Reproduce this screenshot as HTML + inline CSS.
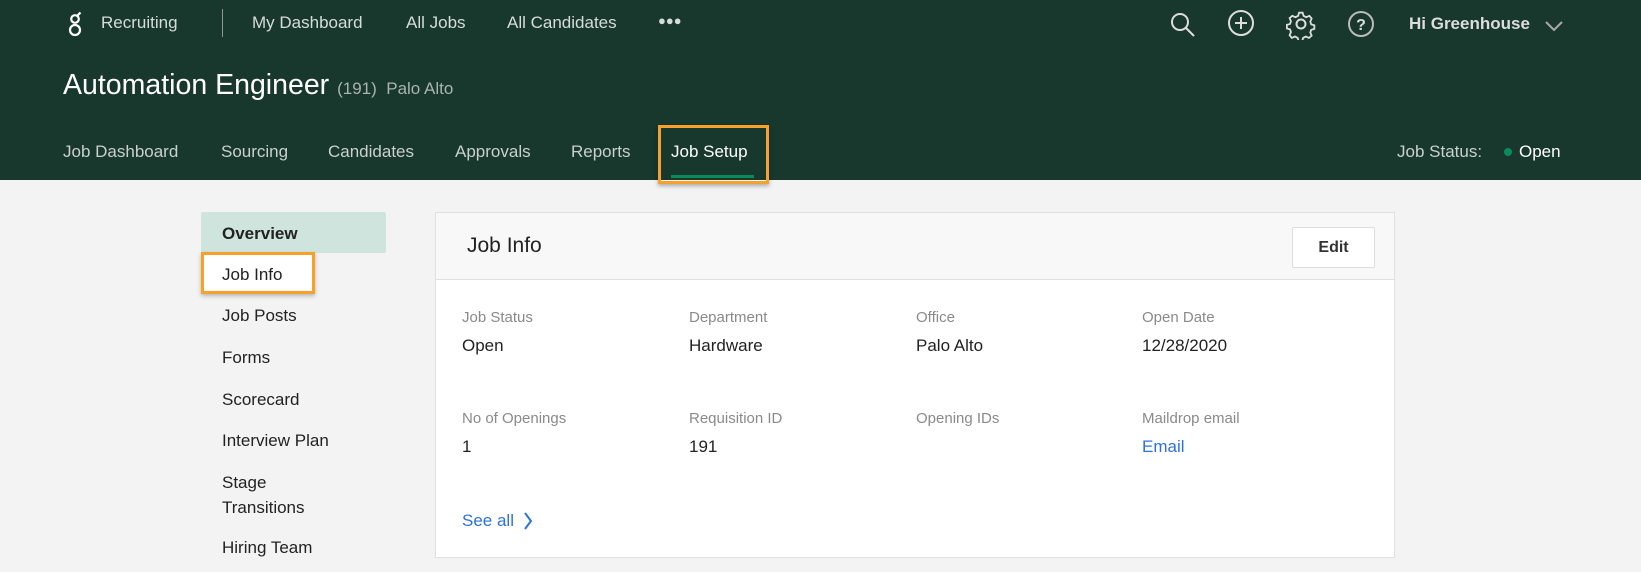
<!DOCTYPE html>
<html><head><meta charset="utf-8"><style>
*{margin:0;padding:0;box-sizing:border-box}
body{width:1641px;height:572px;overflow:hidden;background:#f3f3f3;font-family:"Liberation Sans",sans-serif;position:relative}
.hd{position:absolute;left:0;top:0;width:1641px;height:180px;background:#18372d}
.a{position:absolute;white-space:nowrap}
.nav{color:#d6dcd9;font-size:17px}
.tab{color:#c9d0cd;font-size:17px;top:142px}
.lbl{color:#8a8a8a;font-size:15px}
.val{color:#222;font-size:17px}
.side{color:#222;font-size:17px;left:222px}
</style></head><body>
<div class="hd"></div>
<svg class="a" style="left:66px;top:10px" width="18" height="28" viewBox="0 0 18 28" fill="none" stroke="#fff" stroke-width="2.2"><circle cx="9" cy="9" r="3.8"/><circle cx="9" cy="20" r="5"/><path d="M11.5 5.5 L14.5 2.5"/></svg>
<div class="a nav" style="left:101px;top:13px">Recruiting</div>
<div class="a" style="left:222px;top:9px;width:1px;height:28px;background:#8a9a94"></div>
<div class="a nav" style="left:252px;top:13px">My Dashboard</div>
<div class="a nav" style="left:406px;top:13px">All Jobs</div>
<div class="a nav" style="left:507px;top:13px">All Candidates</div>
<div class="a nav" style="left:658px;top:13px;font-size:13px;letter-spacing:0px">●●●</div>
<div class="a" style="left:63px;top:69px;color:#fff;font-size:28.5px">Automation Engineer <span style="font-size:17px;color:#a9b4b0">(191)&nbsp; Palo Alto</span></div>
<div class="a tab" style="left:63px">Job Dashboard</div>
<div class="a tab" style="left:221px">Sourcing</div>
<div class="a tab" style="left:328px">Candidates</div>
<div class="a tab" style="left:455px">Approvals</div>
<div class="a tab" style="left:571px">Reports</div>
<div class="a tab" style="left:671px;color:#fff">Job Setup</div>
<div class="a" style="left:671px;top:175px;width:83px;height:3px;background:#0b8a5c"></div>
<div class="a" style="left:658px;top:125px;width:111px;height:59px;border:3px solid #f7a12b;box-shadow:0 2px 4px rgba(0,0,0,.3)"></div>
<svg class="a" style="left:1168px;top:10px" width="30" height="30" viewBox="0 0 30 30" fill="none" stroke="#ddd" stroke-width="2"><circle cx="12" cy="12" r="8"/><path d="M18 18 L26 26"/></svg>
<svg class="a" style="left:1226px;top:10px" width="30" height="30" viewBox="0 0 30 30" fill="none" stroke="#ddd" stroke-width="2"><circle cx="15" cy="13" r="12"/><path d="M15 7V19M9 13H21"/></svg>
<svg class="a" style="left:1286px;top:10px" width="30" height="30" viewBox="0 0 30 30" fill="none" stroke="#ddd" stroke-width="2"><circle cx="15" cy="14" r="4.5"/><path d="M13 2h4l1 3.5 3 1.5 3.5-1.5 2.5 3-1.5 3.5 1 3 3.5 1v4l-3.5 1-1 3 1.5 3.5-3 2.5-3.5-1.5-3 1.5-1 3.5h-4l-1-3.5-3-1.5-3.5 1.5-2.5-3 1.5-3.5-1-3-3.5-1v-4l3.5-1 1-3-1.5-3.5 3-2.5 3.5 1.5 3-1.5z" transform="scale(.9) translate(1.5,1)"/></svg>
<svg class="a" style="left:1346px;top:10px" width="30" height="30" viewBox="0 0 30 30"><circle cx="15" cy="14" r="12" fill="none" stroke="#bbb" stroke-width="2"/><text x="15" y="20" text-anchor="middle" fill="#ddd" font-size="16" font-family="Liberation Sans" font-weight="bold">?</text></svg>
<div class="a" style="left:1409px;top:14px;color:#ddd;font-size:17px;font-weight:bold">Hi Greenhouse</div>
<svg class="a" style="left:1544px;top:19px" width="20" height="14" viewBox="0 0 20 14" fill="none" stroke="#aaa" stroke-width="2"><path d="M2 3 L10 11 L18 3"/></svg>
<div class="a" style="left:1397px;top:142px;color:#c9d0cd;font-size:17px">Job Status:</div>
<div class="a" style="left:1504px;top:148px;width:8px;height:8px;border-radius:50%;background:#0b8a5c"></div>
<div class="a" style="left:1519px;top:142px;color:#fff;font-size:17px">Open</div>

<div class="a" style="left:201px;top:212px;width:185px;height:41px;background:#d0e4de;border-radius:2px"></div>
<div class="a side" style="top:224px;font-weight:bold">Overview</div>
<div class="a" style="left:201px;top:252px;width:114px;height:42px;border:3px solid #f7a12b;background:#fff;box-shadow:0 2px 4px rgba(0,0,0,.25)"></div>
<div class="a side" style="top:265px">Job Info</div>
<div class="a side" style="top:306px">Job Posts</div>
<div class="a side" style="top:348px">Forms</div>
<div class="a side" style="top:390px">Scorecard</div>
<div class="a side" style="top:431px">Interview Plan</div>
<div class="a side" style="top:473px">Stage</div>
<div class="a side" style="top:498px">Transitions</div>
<div class="a side" style="top:538px">Hiring Team</div>

<div class="a" style="left:435px;top:212px;width:960px;height:346px;background:#fff;border:1px solid #e0e0e0"></div>
<div class="a" style="left:436px;top:213px;width:958px;height:67px;background:#f8f8f8;border-bottom:1px solid #e0e0e0"></div>
<div class="a" style="left:467px;top:234px;color:#222;font-size:21px">Job Info</div>
<div class="a" style="left:1292px;top:227px;width:83px;height:41px;background:#fff;border:1px solid #ddd;border-radius:2px;text-align:center;line-height:39px;font-size:16px;font-weight:bold;color:#333">Edit</div>

<div class="a lbl" style="left:462px;top:309px">Job Status</div>
<div class="a lbl" style="left:689px;top:309px">Department</div>
<div class="a lbl" style="left:916px;top:309px">Office</div>
<div class="a lbl" style="left:1142px;top:309px">Open Date</div>
<div class="a val" style="left:462px;top:336px">Open</div>
<div class="a val" style="left:689px;top:336px">Hardware</div>
<div class="a val" style="left:916px;top:336px">Palo Alto</div>
<div class="a val" style="left:1142px;top:336px">12/28/2020</div>
<div class="a lbl" style="left:462px;top:410px">No of Openings</div>
<div class="a lbl" style="left:689px;top:410px">Requisition ID</div>
<div class="a lbl" style="left:916px;top:410px">Opening IDs</div>
<div class="a lbl" style="left:1142px;top:410px">Maildrop email</div>
<div class="a val" style="left:462px;top:437px">1</div>
<div class="a val" style="left:689px;top:437px">191</div>
<div class="a val" style="left:1142px;top:437px;color:#2e72d9">Email</div>
<div class="a" style="left:462px;top:511px;color:#2e72d9;font-size:17px">See all</div>
<svg class="a" style="left:522px;top:511px" width="12" height="20" viewBox="0 0 12 20" fill="none" stroke="#2e72d9" stroke-width="2"><path d="M3 2 L9 10 L3 18"/></svg>
</body></html>
